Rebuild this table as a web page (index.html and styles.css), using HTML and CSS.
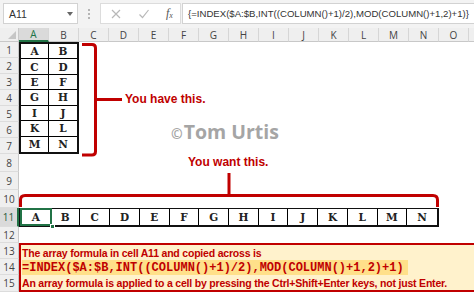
FILE: index.html
```html
<!DOCTYPE html>
<html>
<head>
<meta charset="utf-8">
<link rel="stylesheet" href="styles.css">
</head>
<body>
<div class="app">
  <div class="fbar">
    <div class="namebox"><span class="nb-text">A11</span><span class="caret"></span></div>
    <div class="grip"><i></i><i></i><i></i></div>
    <div class="btns">
      <svg class="ic" width="12" height="12" viewBox="0 0 12 12"><path d="M2 2 L10 10 M10 2 L2 10" stroke="#b8b8b8" stroke-width="1.2" fill="none"/></svg>
      <svg class="ic" width="12" height="12" viewBox="0 0 12 12"><path d="M1.5 6.5 L4.5 9.5 L10.5 2" stroke="#b8b8b8" stroke-width="1.2" fill="none"/></svg>
      <span class="fx"><i>f</i><sub>x</sub></span>
    </div>
    <div class="formula">{=INDEX($A:$B,INT((COLUMN()+1)/2),MOD(COLUMN()+1,2)+1)}</div>
  </div>
  <div class="sheet">
    <div class="corner"><span class="tri"></span></div>
    <div class="ch sel">A</div><div class="ch">B</div><div class="ch">C</div><div class="ch">D</div><div class="ch">E</div><div class="ch">F</div><div class="ch">G</div><div class="ch">H</div><div class="ch">I</div><div class="ch">J</div><div class="ch">K</div><div class="ch">L</div><div class="ch">M</div><div class="ch">N</div><div class="ch">O</div><div class="ch last"></div>

    <div class="rh">1</div><div class="rh">2</div><div class="rh">3</div><div class="rh">4</div><div class="rh">5</div><div class="rh">6</div><div class="rh">7</div><div class="rh">8</div><div class="rh">9</div><div class="rh">10</div><div class="rh sel">11</div><div class="rh">12</div><div class="rh">13</div><div class="rh">14</div><div class="rh">15</div>

    <div class="have">
      <div class="c">A</div><div class="c">B</div>
      <div class="c">C</div><div class="c">D</div>
      <div class="c">E</div><div class="c">F</div>
      <div class="c">G</div><div class="c">H</div>
      <div class="c">I</div><div class="c">J</div>
      <div class="c">K</div><div class="c">L</div>
      <div class="c">M</div><div class="c">N</div>
    </div>

    <div class="want">
      <div class="c active">A<span class="handle"></span></div><div class="c">B</div><div class="c">C</div><div class="c">D</div><div class="c">E</div><div class="c">F</div><div class="c">G</div><div class="c">H</div><div class="c">I</div><div class="c">J</div><div class="c">K</div><div class="c">L</div><div class="c">M</div><div class="c">N</div>
    </div>

    <div class="note">
      <div class="nrow">The array formula in cell A11 and copied across is</div>
      <div class="nrow mid"><span class="hl">=INDEX($A:$B,INT((COLUMN()+1)/2),MOD(COLUMN()+1,2)+1)</span></div>
      <div class="nrow">An array formula is applied to a cell by pressing the Ctrl+Shift+Enter keys, not just Enter.</div>
    </div>
  </div>

  <svg class="overlay" width="474" height="292" viewBox="0 0 474 292">
    <g stroke="#c00000" stroke-width="3" fill="none" stroke-linejoin="round">
      <path d="M82 44.5 H92 Q95.5 44.5 95.5 48 V151.5 Q95.5 155 92 155 H82"/>
      <path d="M95.5 99.5 H122"/>
      <path d="M229 173 V195.5"/>
      <path d="M20.5 207 V200 Q20.5 195.5 25 195.5 H433 Q437.5 195.5 437.5 200 V207"/>
    </g>
  </svg>
  <div class="label l-have">You have this.</div>
  <div class="label l-want">You want this.</div>
  <div class="mark"><span class="copy">©</span>Tom Urtis</div>
</div>
</body>
</html>
```
FILE: styles.css
```css
* { box-sizing: border-box; }
html, body { margin: 0; padding: 0; background: #fff; }
body { width: 474px; height: 292px; overflow: hidden; }

.app {
  position: relative;
  width: 474px;
  height: 292px;
  display: flex;
  flex-direction: column;
  font-family: "Open Sans", "Noto Sans", sans-serif;
}

/* formula bar */
.fbar {
  height: 28px;
  flex: none;
  background: #f3f3f3;
  display: flex;
  align-items: flex-start;
  padding-top: 3px;
  padding-left: 3px;
}
.namebox {
  width: 75px;
  height: 21px;
  background: #fff;
  border: 1px solid #d2d2d2;
  display: flex;
  align-items: center;
  justify-content: space-between;
  padding: 0 4px 0 5px;
  font-family: "Liberation Sans", sans-serif;
  font-size: 10.5px;
  color: #333;
}
.caret {
  width: 0; height: 0;
  border-left: 3px solid transparent;
  border-right: 3px solid transparent;
  border-top: 4px solid #666;
}
.grip {
  width: 22px;
  height: 21px;
  display: flex;
  flex-direction: column;
  align-items: center;
  justify-content: center;
  gap: 2px;
}
.grip i { display: block; width: 2px; height: 2px; background: #b5b5b5; }
.btns {
  width: 81px;
  height: 21px;
  background: #fff;
  border: 1px solid #dcdcdc;
  display: flex;
  align-items: center;
  padding-left: 9px;
  gap: 16px;
}
.fx { font-family: "Liberation Serif", serif; font-size: 12px; color: #555; line-height: 1; }
.fx i { font-style: italic; }
.fx sub { font-size: 8px; vertical-align: -1px; font-style: italic; }
.formula {
  flex: 1;
  height: 21px;
  margin-left: 1px;
  background: #fff;
  border: 1px solid #d2d2d2;
  border-right: none;
  font-family: "Liberation Sans", sans-serif;
  font-size: 9.6px;
  color: #333;
  padding-left: 5px;
  line-height: 19px;
  white-space: nowrap;
  overflow: hidden;
}

/* sheet */
.sheet {
  flex: 1;
  display: grid;
  grid-template-columns: 19px repeat(15, 30px) 1fr;
  grid-template-rows: 14px repeat(7, 16px) 18px 18px 18px 19px 16px 16px 16px 17px;
  background: #fff;
}
.corner {
  grid-row: 1; grid-column: 1;
  background: #efefef;
  border-right: 1px solid #c8c8c8;
  border-bottom: 1px solid #c8c8c8;
  position: relative;
}
.tri {
  position: absolute; right: 2px; bottom: 2px;
  width: 0; height: 0;
  border-left: 8px solid transparent;
  border-bottom: 8px solid #c6c6c6;
}
.ch {
  grid-row: 1;
  background: #efefef;
  border-right: 1px solid #d6d6d6;
  border-bottom: 1px solid #c8c8c8;
  font-size: 10px;
  color: #444;
  display: flex; align-items: center; justify-content: center;
  line-height: 1;
}
.ch.sel { background: #dadada; border-bottom: 2px solid #217346; color: #217346; }
.ch.last { border-right: none; }
.rh {
  grid-column: 1;
  background: #efefef;
  border-right: 1px solid #c8c8c8;
  border-bottom: 1px solid #dcdcdc;
  font-size: 10px;
  color: #444;
  display: flex; align-items: center; justify-content: center;
  line-height: 1;
}
.rh.sel { background: #dadada; border-right: 2px solid #217346; color: #2b5a3c; }

.c {
  font-family: "DejaVu Serif", "Liberation Serif", serif;
  font-weight: bold;
  font-size: 10.5px;
  color: #222;
  display: flex; align-items: center; justify-content: center;
  border-right: 1px solid #000;
  border-bottom: 1px solid #000;
}
.have {
  grid-column: 2 / 4;
  grid-row: 2 / 9;
  display: grid;
  grid-template-columns: 1fr 1fr;
  grid-template-rows: repeat(7, 1fr);
  border: 2px solid #111;
}
.have .c:nth-child(2n) { border-right: none; }
.have .c:nth-last-child(-n+2) { border-bottom: none; }

.want {
  grid-column: 2 / 16;
  grid-row: 12;
  display: grid;
  grid-template-columns: repeat(14, 1fr);
  border: 2px solid #111;
  border-top-width: 1.5px;
}
.want .c { border-bottom: none; }
.want .c:last-child { border-right: none; }
.want .active {
  position: relative;
  outline: 2px solid #217346;
  outline-offset: -1px;
  border-right: none;
}
.handle {
  position: absolute;
  right: -4px; bottom: -4px;
  width: 5px; height: 5px;
  background: #217346;
  border: 1px solid #fff;
}

.note {
  grid-column: 2 / -1;
  grid-row: 14 / 17;
  border: 2px solid #c00000;
  border-right: none;
  background: #fff2cc;
  display: grid;
  grid-template-rows: 1fr 1fr 1fr;
  font-family: "Liberation Sans", sans-serif;
  font-weight: bold;
  font-size: 10.5px;
  letter-spacing: -0.2px;
  color: #c00000;
}
.nrow {
  display: flex;
  align-items: center;
  padding-left: 1px;
  white-space: nowrap;
  overflow: hidden;
}
.nrow.mid { align-items: stretch; }
.hl {
  background: #ffe08a;
  font-family: "Liberation Mono", monospace;
  font-size: 12px;
  letter-spacing: 0;
  color: #c00000;
  display: flex; align-items: center;
  padding-right: 4px;
}

/* annotations */
.overlay { position: absolute; left: 0; top: 0; pointer-events: none; }
.label {
  position: absolute;
  font-family: "Liberation Sans", Arial, sans-serif;
  font-weight: bold;
  font-size: 12px;
  color: #c00000;
  line-height: 14px;
  white-space: nowrap;
}
.l-have { left: 125px; top: 92px; }
.l-want { left: 188px; top: 155px; }
.mark {
  position: absolute;
  left: 171px; top: 118px;
  font-family: "Open Sans", sans-serif;
  font-weight: bold;
  font-size: 19.5px;
  line-height: 27px;
  color: #a5a5a5;
  white-space: nowrap;
}
.copy { font-size: 14px; margin-right: 1px; }
```
